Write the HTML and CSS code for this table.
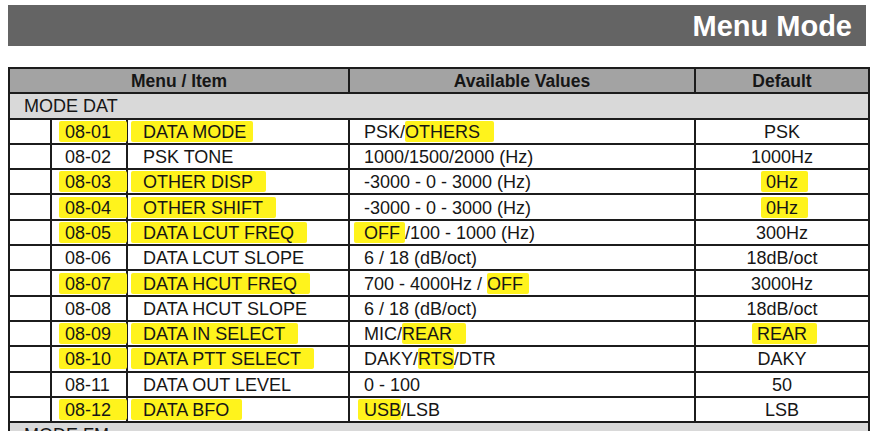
FILE: index.html
```html
<!DOCTYPE html>
<html>
<head>
<meta charset="utf-8">
<link rel="stylesheet" href="styles.css">
</head>
<body>
<div class="titlebar"><h1 class="title">Menu Mode</h1></div>
<table class="menu">
  <colgroup>
    <col class="c-indent"><col class="c-num"><col class="c-name"><col class="c-vals"><col class="c-def">
  </colgroup>
  <thead>
    <tr class="head"><th colspan="3">Menu / Item</th><th>Available Values</th><th>Default</th></tr>
  </thead>
  <tbody>
    <tr class="group"><td colspan="5">MODE DAT</td></tr>
    <tr><td></td><td class="num"><span class="hl hn">08-01</span></td><td class="name"><span class="hl hm s1">DATA MODE</span></td><td class="vals">PSK/<span class="hl hv">OTHERS</span></td><td class="def">PSK</td></tr>
    <tr><td></td><td class="num">08-02</td><td class="name">PSK TONE</td><td class="vals">1000/1500/2000 (Hz)</td><td class="def">1000Hz</td></tr>
    <tr><td></td><td class="num"><span class="hl hn">08-03</span></td><td class="name"><span class="hl hm">OTHER DISP</span></td><td class="vals">-3000 - 0 - 3000 (Hz)</td><td class="def"><span class="hl hd">0Hz</span></td></tr>
    <tr><td></td><td class="num"><span class="hl hn">08-04</span></td><td class="name"><span class="hl hm">OTHER SHIFT</span></td><td class="vals">-3000 - 0 - 3000 (Hz)</td><td class="def"><span class="hl hd">0Hz</span></td></tr>
    <tr><td></td><td class="num"><span class="hl hn">08-05</span></td><td class="name"><span class="hl hm">DATA LCUT FREQ</span></td><td class="vals"><span class="hl hv0">OFF </span>/100 - 1000 (Hz)</td><td class="def">300Hz</td></tr>
    <tr><td></td><td class="num">08-06</td><td class="name">DATA LCUT SLOPE</td><td class="vals">6 / 18 (dB/oct)</td><td class="def">18dB/oct</td></tr>
    <tr><td></td><td class="num"><span class="hl hn">08-07</span></td><td class="name"><span class="hl hm">DATA HCUT FREQ</span></td><td class="vals">700 - 4000Hz / <span class="hl hv s1">OFF</span></td><td class="def">3000Hz</td></tr>
    <tr><td></td><td class="num">08-08</td><td class="name">DATA HCUT SLOPE</td><td class="vals">6 / 18 (dB/oct)</td><td class="def">18dB/oct</td></tr>
    <tr><td></td><td class="num"><span class="hl hn">08-09</span></td><td class="name"><span class="hl hm">DATA IN SELECT</span></td><td class="vals">MIC/<span class="hl hv">REAR</span></td><td class="def"><span class="hl hd">REAR</span></td></tr>
    <tr><td></td><td class="num"><span class="hl hn">08-10</span></td><td class="name"><span class="hl hm">DATA PTT SELECT</span></td><td class="vals">DAKY/<span class="hl hv s0">RTS</span>/DTR</td><td class="def">DAKY</td></tr>
    <tr><td></td><td class="num">08-11</td><td class="name">DATA OUT LEVEL</td><td class="vals">0 - 100</td><td class="def">50</td></tr>
    <tr><td></td><td class="num"><span class="hl hn">08-12</span></td><td class="name"><span class="hl hm">DATA BFO</span></td><td class="vals"><span class="hl hv0 s0">USB</span>/LSB</td><td class="def">LSB</td></tr>
    <tr class="group"><td colspan="5">MODE FM</td></tr>
  </tbody>
</table>
</body>
</html>
```

FILE: styles.css
```css
html, body {
  margin: 0;
  padding: 0;
  overflow: hidden;
  background: #ffffff;
}
body {
  font-family: "Liberation Sans", Arial, sans-serif;
  color: #161616;
}
.titlebar {
  margin: 5px 21px 0 8px;
  height: 41px;
  background: #646464;
  display: flex;
  justify-content: flex-end;
  align-items: center;
  padding-right: 14px;
}
.title {
  margin: 0;
  font-size: 29px;
  font-weight: bold;
  color: #ffffff;
  line-height: 1;
  padding-top: 1px;
}
.menu {
  margin: 21px 0 0 8px;
  width: 860px;
  table-layout: fixed;
  border-collapse: collapse;
  font-size: 18px;
  line-height: 20px;
  border: 2px solid #1c1c1c;
}
.c-indent { width: 42px; }
.c-num { width: 76px; }
.c-name { width: 222px; }
.c-vals { width: 346px; }
.c-def { width: 174px; }
.menu th, .menu td {
  border: 2px solid #1c1c1c;
  height: 20.3px;
  padding: 2px 0 1px 0;
  white-space: nowrap;
  vertical-align: middle;
}
.menu th {
  background: #a3a3a3;
  font-weight: bold;
  text-align: center;
  font-size: 17.5px;
}
.group td {
  background: #d9d9d9;
  padding-left: 14px;
}
.num { padding-left: 13px !important; }
.name { padding-left: 15px !important; }
.vals { padding-left: 14px !important; }
.def { text-align: center; }
.hl {
  background: #fff31c;
  border-radius: 2px;
  padding: 1px 0 0 0;
}
.hn { padding-left: 6px; padding-right: 16px; margin-left: -6px; margin-right: -16px; }
.hm { padding-left: 12px; padding-right: 13px; margin-left: -12px; margin-right: -13px; }
.hm.s1 { padding-right: 7px; margin-right: -7px; }
.hv { padding-left: 0; padding-right: 14px; margin-right: -14px; }
.hv.s1 { padding-right: 6px; margin-right: -6px; }
.hv.s0 { padding-right: 0; margin-right: 0; }
.hv0 { padding-left: 10px; padding-right: 0; margin-left: -10px; }
.hv0.s0 { padding-left: 6px; margin-left: -6px; }
.hd { padding-left: 5px; padding-right: 10px; margin-left: -5px; margin-right: -10px; }
```
